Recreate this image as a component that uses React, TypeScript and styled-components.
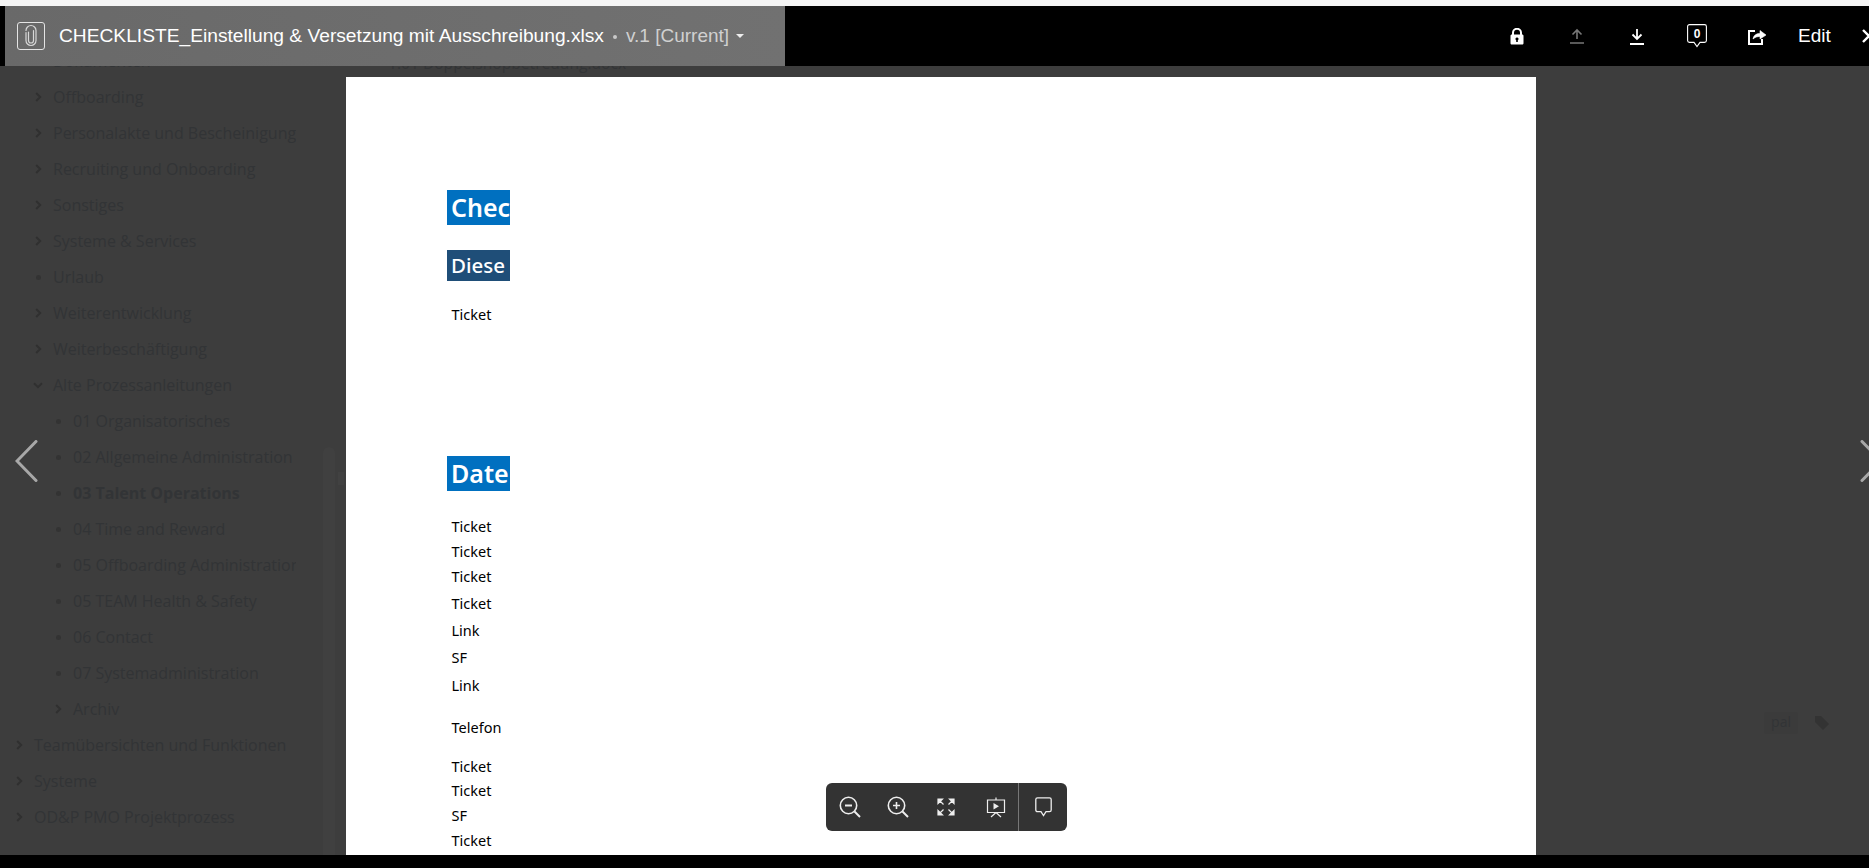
import React from "react";
import styled, { createGlobalStyle } from "styled-components";

const Global = createGlobalStyle`
  html, body { margin: 0; padding: 0; height: 100%; overflow: hidden; background: #000; }
  #root { height: 100%; }
`;

const Page = styled.div`
  display: flex;
  flex-direction: column;
  width: 1869px;
  height: 868px;
  overflow: hidden;
  font-family: "Liberation Sans", Arial, sans-serif;
`;
const TopStrip = styled.div`
  height: 6px;
  background: #f5f5f5;
  flex: none;
`;
const Header = styled.header`
  position: relative;
  z-index: 2;
  flex: none;
  height: 60px;
  display: flex;
  align-items: center;
  background: #000;
  padding-left: 5px;
`;
const TitleBlock = styled.div`
  display: flex;
  align-items: center;
  width: 780px;
  height: 60px;
  padding-left: 12px;
  box-sizing: border-box;
  background: linear-gradient(90deg, #696969, #717171);
  color: #fff;
  flex: none;
`;
const FileIcon = styled.div`
  display: flex;
  align-items: center;
  justify-content: center;
  width: 28px;
  height: 28px;
  box-sizing: border-box;
  border: 1px solid #e4e4e4;
  border-radius: 3px;
  margin-right: 14px;
  flex: none;
`;
const FileName = styled.span`
  font-size: 19.2px;
  white-space: nowrap;
`;
const Dot = styled.span`
  width: 4px;
  height: 4px;
  border-radius: 50%;
  background: #c8c8c8;
  margin: 2px 9px 0 9px;
`;
const Version = styled.span`
  font-size: 19px;
  color: #d0d0d0;
  white-space: nowrap;
`;
const Caret = styled.span`
  width: 0;
  height: 0;
  margin: 0 0 0 7px;
  border-left: 4px solid transparent;
  border-right: 4px solid transparent;
  border-top: 4px solid #eee;
`;
const Actions = styled.div`
  display: flex;
  align-items: center;
  margin-left: auto;
  margin-right: -7px;
`;
const ActionSlot = styled.div<{ $dim?: boolean }>`
  position: relative;
  display: flex;
  align-items: center;
  justify-content: center;
  width: 60px;
  height: 60px;
  color: ${(p) => (p.$dim ? "#777" : "#fff")};
`;
const CommentCount = styled.span`
  position: absolute;
  left: 0;
  right: 0;
  top: 21px;
  text-align: center;
  font-size: 12px;
  font-weight: 700;
  color: #fff;
`;
const EditLabel = styled.span`
  font-size: 19px;
  width: 33px;
  color: #fff;
  margin: 0 31px 0 11px;
`;

const Stage = styled.main`
  position: relative;
  flex: 1;
  min-height: 0;
  display: flex;
  overflow: hidden;
  background: #3d3d3d;
  color: #323436;
  font-family: "Open Sans", "Noto Sans", sans-serif;
`;
const Sidebar = styled.nav`
  width: 296px;
  flex: none;
  margin-top: -23px;
  overflow: hidden;
`;
const Row = styled.div<{ $level: number; $bold?: boolean }>`
  display: flex;
  align-items: center;
  height: 36px;
  padding-left: ${(p) => [12, 31, 51][p.$level]}px;
  font-size: 16px;
  font-weight: ${(p) => (p.$bold ? 700 : 400)};
  white-space: nowrap;
`;
const Marker = styled.span`
  display: flex;
  align-items: center;
  justify-content: center;
  width: 14px;
  margin-right: 8px;
  flex: none;
`;
const Bullet = styled.span`
  width: 5px;
  height: 5px;
  border-radius: 50%;
  background: #333;
`;
const ScrollTrack = styled.div`
  position: relative;
  flex: none;
  width: 12px;
  margin: 381px 0 0 27px;
  border-radius: 6px 6px 0 0;
  background: #404040;
  &::after {
    content: "";
    position: absolute;
    left: 15px;
    top: 25px;
    width: 6px;
    height: 13px;
    background: #414141;
  }
`;
const Main = styled.div`
  flex: 1;
  display: flex;
  flex-direction: column;
  justify-content: space-between;
  margin: -23px 0 0 53px;
  padding: 0 39px 121px 0;
  min-width: 0;
`;
const FileLine = styled.div`
  height: 36px;
  line-height: 36px;
  padding-top: 2px;
  font-size: 15.6px;
  white-space: nowrap;
`;
const Tags = styled.div`
  display: flex;
  align-items: center;
  gap: 16px;
  align-self: flex-end;
`;
const TagChip = styled.span`
  padding: 0 7px;
  height: 22px;
  line-height: 20px;
  font-size: 14px;
  background: #3b3b3b;
  border-radius: 2px;
`;

const Paper = styled.section`
  position: absolute;
  left: 346px;
  top: 11px;
  bottom: 0;
  width: 1190px;
  padding: 113px 0 0 101px;
  box-sizing: border-box;
  overflow: hidden;
  background: #fff;
  font-family: "Noto Sans", "Open Sans", sans-serif;
`;
const Band = styled.div<{ $bg: string; $h: number; $size: number; $mb: number; $mt?: number; $weight: number }>`
  width: 63px;
  height: ${(p) => p.$h}px;
  line-height: ${(p) => p.$h}px;
  margin-top: ${(p) => p.$mt ?? 0}px;
  margin-bottom: ${(p) => p.$mb}px;
  padding-left: 4px;
  box-sizing: border-box;
  overflow: hidden;
  white-space: nowrap;
  background: ${(p) => p.$bg};
  color: #fff;
  font-size: ${(p) => p.$size}px;
  font-weight: ${(p) => p.$weight};
`;
const Cell = styled.div<{ $h: number }>`
  height: ${(p) => p.$h}px;
  line-height: ${(p) => p.$h}px;
  padding-left: 4.5px;
  font-size: 14.5px;
  color: #000;
`;

const NavArrow = styled.svg<{ $side: "left" | "right" }>`
  position: absolute;
  top: 374px;
  ${(p) => (p.$side === "left" ? "left: 15px;" : "right: -14px;")}
  width: 24px;
  height: 42px;
`;

const Toolbar = styled.div`
  position: absolute;
  left: 826px;
  top: 717px;
  display: flex;
  align-items: stretch;
  width: 241px;
  height: 48px;
  border-radius: 6px;
  background: #333;
  color: #eee;
`;
const ToolButton = styled.div<{ $nudge?: number }>`
  display: flex;
  align-items: center;
  justify-content: center;
  width: 48px;
  box-sizing: border-box;
  padding-left: ${(p) => p.$nudge ?? 0}px;
`;
const ToolDivider = styled.div`
  width: 1px;
  background: #777;
`;
const Footer = styled.footer`
  flex: none;
  height: 13px;
  background: #000;
`;

const ClipIcon = () => (
  <svg width="18" height="24" viewBox="0 0 18 24" fill="none" stroke="#d8d8d8" strokeWidth="1.2" strokeLinecap="round">
    <path d="M4 6.500a5 5 0 0 1 10 0v10a5 5 0 0 1-10 0V8.500" />
    <path d="M6.500 8v8.500a2.500 2.500 0 0 0 5 0V6.500" />
  </svg>
);
const LockIcon = () => (
  <svg width="14" height="17" viewBox="0 0 14 17" fill="#fff">
    <path d="M3 7V4.800a4 4 0 0 1 8 0V7" fill="none" stroke="#fff" strokeWidth="2" />
    <path fillRule="evenodd" d="M1.800 6.500h10.400c.7 0 1.300.6 1.300 1.300v7.400c0 .7-.6 1.300-1.300 1.300H1.800c-.7 0-1.300-.6-1.300-1.300V7.800c0-.7.6-1.300 1.300-1.300zM7 9.500a1.500 1.500 0 0 0-.8 2.800v1.700h1.600v-1.700A1.500 1.500 0 0 0 7 9.500z" />
  </svg>
);
const UpIcon = () => (
  <svg width="14" height="16" viewBox="0 0 14 16" fill="none" stroke="currentColor" strokeWidth="1.6">
    <path d="M7 11V2M2.500 6.500 7 2l4.500 4.500M0 15h14" />
  </svg>
);
const DownIcon = () => (
  <svg width="14" height="17" viewBox="0 0 14 17" fill="none" stroke="currentColor" strokeWidth="1.8">
    <path d="M7 1v10M2.500 6.500 7 11l4.500-4.500M0 16h14" />
  </svg>
);
const BubbleIcon = () => (
  <svg width="20" height="24" viewBox="0 0 20 24" fill="none" stroke="#fff" strokeWidth="1.1">
    <path d="M2.500.6h15c1 0 1.900.8 1.900 1.900v14c0 1-.9 1.900-1.900 1.900H13L10 22.600 7 18.400H2.500c-1 0-1.900-.9-1.900-1.900v-14C.6 1.400 1.500.6 2.500.6z" />
  </svg>
);
const ShareIcon = () => (
  <svg width="19" height="17" viewBox="0 0 19 17" fill="none" stroke="#fff" strokeWidth="2">
    <path d="M7 3H1v13h13v-5" />
    <path d="M5 11c.5-3.500 3-5.500 7-5.500V2.500l6 4.500-6 4V8.500c-3 0-5 .8-7 2.500z" fill="#fff" strokeWidth="0.6" />
  </svg>
);
const CloseIcon = () => (
  <svg width="14" height="14" viewBox="0 0 14 14" stroke="#fff" strokeWidth="2.400">
    <path d="M1 1l12 12M13 1 1 13" />
  </svg>
);
const ZoomIcon = ({ plus }: { plus?: boolean }) => (
  <svg width="22" height="22" viewBox="0 0 22 22" fill="none" stroke="currentColor" strokeWidth="1.6">
    <circle cx="9.500" cy="9.500" r="8.200" />
    <path d="M15.500 15.500l5.500 5.500" strokeWidth="2" />
    <path d={plus ? "M6 9.500h7M9.500 6v7" : "M6 9.500h7"} strokeWidth={plus ? 1.6 : 2} />
  </svg>
);
const FitIcon = () => (
  <svg width="18" height="18" viewBox="0 0 18 18" fill="currentColor" stroke="currentColor" strokeWidth="1.200">
    <path d="M1 1h4.500L1 5.500zM2.500 2.500l4 4M17 1h-4.500L17 5.500zM15.500 2.500l-4 4M1 17h4.500L1 12.500zM2.500 15.500l4-4M17 17h-4.500l4.500-4.500zM15.500 15.500l-4-4" />
  </svg>
);
const PresentIcon = () => (
  <svg width="20" height="21" viewBox="0 0 20 21" fill="none" stroke="currentColor" strokeWidth="1.200">
    <path d="M10 .5v2.500M1.500 3h17v12.500h-17zM10 15.500l-5 4.500M10 15.500l5 4.500" />
    <path d="M7.500 6v6.500l5.500-3.200z" fill="currentColor" stroke="none" />
  </svg>
);
const ToolBubble = () => (
  <svg width="17" height="20" viewBox="0 0 17 20" fill="none" stroke="currentColor" strokeWidth="1.300">
    <path d="M2.500.8h12c1 0 1.700.8 1.700 1.700v10.500c0 1-.7 1.700-1.700 1.700h-3.500L8.500 18.500 6 14.700H2.500c-1 0-1.700-.7-1.700-1.700V2.500C.8 1.600 1.500.8 2.500.8z" />
  </svg>
);
const TagIcon = () => (
  <svg width="16" height="16" viewBox="0 0 16 16" fill="#333">
    <path d="M1 1h6l8 8-6 6-8-8z" />
  </svg>
);
const ChevronRight = () => (
  <svg width="7" height="10" viewBox="0 0 7 10" fill="none" stroke="#303030" strokeWidth="2">
    <path d="M1.200 1 5.200 5l-4 4" />
  </svg>
);
const ChevronDown = () => (
  <svg width="10" height="7" viewBox="0 0 10 7" fill="none" stroke="#303030" strokeWidth="2">
    <path d="M1 1.200l4 4 4-4" />
  </svg>
);

type Kind = "right" | "down" | "dot";
const tree: { text: string; level: number; kind: Kind; bold?: boolean }[] = [
  { text: "Dokumenten", level: 1, kind: "right" },
  { text: "Offboarding", level: 1, kind: "right" },
  { text: "Personalakte und Bescheinigung", level: 1, kind: "right" },
  { text: "Recruiting und Onboarding", level: 1, kind: "right" },
  { text: "Sonstiges", level: 1, kind: "right" },
  { text: "Systeme & Services", level: 1, kind: "right" },
  { text: "Urlaub", level: 1, kind: "dot" },
  { text: "Weiterentwicklung", level: 1, kind: "right" },
  { text: "Weiterbeschäftigung", level: 1, kind: "right" },
  { text: "Alte Prozessanleitungen", level: 1, kind: "down" },
  { text: "01 Organisatorisches", level: 2, kind: "dot" },
  { text: "02 Allgemeine Administration", level: 2, kind: "dot" },
  { text: "03 Talent Operations", level: 2, kind: "dot", bold: true },
  { text: "04 Time and Reward", level: 2, kind: "dot" },
  { text: "05 Offboarding Administration", level: 2, kind: "dot" },
  { text: "05 TEAM Health & Safety", level: 2, kind: "dot" },
  { text: "06 Contact", level: 2, kind: "dot" },
  { text: "07 Systemadministration", level: 2, kind: "dot" },
  { text: "Archiv", level: 2, kind: "right" },
  { text: "Teamübersichten und Funktionen", level: 0, kind: "right" },
  { text: "Systeme", level: 0, kind: "right" },
  { text: "OD&P PMO Projektprozess", level: 0, kind: "right" },
];

const cells: [string, number][] = [
  ["Ticket", 25],
  ["Ticket", 24],
  ["Ticket", 26],
  ["Ticket", 28],
  ["Link", 26],
  ["SF", 28],
  ["Link", 28],
  ["Telefon", 56],
  ["Ticket", 23],
  ["Ticket", 24],
  ["SF", 26],
  ["Ticket", 25],
];

export default function App() {
  return (
    <Page>
      <Global />
      <TopStrip />
      <Header>
        <TitleBlock>
          <FileIcon>
            <ClipIcon />
          </FileIcon>
          <FileName>CHECKLISTE_Einstellung &amp; Versetzung mit Ausschreibung.xlsx</FileName>
          <Dot />
          <Version>v.1 [Current]</Version>
          <Caret />
        </TitleBlock>
        <Actions>
          <ActionSlot>
            <LockIcon />
          </ActionSlot>
          <ActionSlot $dim>
            <UpIcon />
          </ActionSlot>
          <ActionSlot>
            <DownIcon />
          </ActionSlot>
          <ActionSlot>
            <BubbleIcon />
            <CommentCount>0</CommentCount>
          </ActionSlot>
          <ActionSlot>
            <ShareIcon />
          </ActionSlot>
          <EditLabel>Edit</EditLabel>
          <CloseIcon />
        </Actions>
      </Header>
      <Stage>
        <Sidebar>
          {tree.map((r) => (
            <Row key={r.text} $level={r.level} $bold={r.bold}>
              <Marker>
                {r.kind === "right" && <ChevronRight />}
                {r.kind === "down" && <ChevronDown />}
                {r.kind === "dot" && <Bullet />}
              </Marker>
              {r.text}
            </Row>
          ))}
        </Sidebar>
        <ScrollTrack />
        <Main>
          <FileLine>1.01 Doppelshopbetreuung.docx</FileLine>
          <Tags>
            <TagChip>pal</TagChip>
            <TagIcon />
          </Tags>
        </Main>
        <Paper>
          <Band $bg="#0070c0" $h={35} $size={25} $mb={25} $weight={600}>
            Checkliste
          </Band>
          <Band $bg="#1f4e78" $h={31} $size={20.5} $mb={21} $weight={500}>
            Diese Liste
          </Band>
          <Cell $h={25}>Ticket</Cell>
          <Band $bg="#0070c0" $h={35} $size={25} $mb={23} $mt={129} $weight={600}>
            Daten
          </Band>
          {cells.map(([text, h], i) => (
            <Cell key={i} $h={h}>
              {text}
            </Cell>
          ))}
        </Paper>
        <NavArrow $side="left" viewBox="0 0 24 42" fill="none" stroke="#a8a8a8" strokeWidth="3" strokeLinecap="round">
          <path d="M21 1.500 2 21l19 19.500" />
        </NavArrow>
        <NavArrow $side="right" viewBox="0 0 24 42" fill="none" stroke="#a8a8a8" strokeWidth="3" strokeLinecap="round">
          <path d="M3 1.500 22 21 3 40.500" />
        </NavArrow>
        <Toolbar>
          <ToolButton>
            <ZoomIcon />
          </ToolButton>
          <ToolButton>
            <ZoomIcon plus />
          </ToolButton>
          <ToolButton>
            <FitIcon />
          </ToolButton>
          <ToolButton $nudge={4}>
            <PresentIcon />
          </ToolButton>
          <ToolDivider />
          <ToolButton>
            <ToolBubble />
          </ToolButton>
        </Toolbar>
      </Stage>
      <Footer />
    </Page>
  );
}
